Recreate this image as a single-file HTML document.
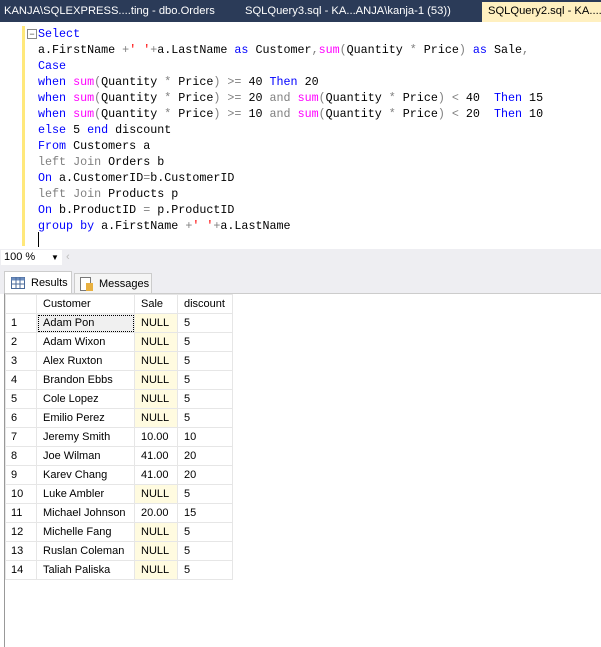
<!DOCTYPE html>
<html><head><style>
body{margin:0;width:601px;height:646px;overflow:hidden;background:#fff;font-family:"Liberation Sans",sans-serif;position:relative}
.tabbar{position:absolute;left:0;top:0;width:601px;height:22px;background:#2b3b58;color:#fff;font-size:11.2px;white-space:nowrap}
.tabbar span{position:absolute;top:5px}
.active{position:absolute;left:482px;top:2px;width:119px;height:20px;background:#fff0c0;color:#000;overflow:hidden}
.yb{position:absolute;left:22px;top:26px;width:3px;height:220px;background:#ffe87a}
.code{position:absolute;left:38px;top:26px;font-family:"Liberation Mono",monospace;font-size:11.7px;line-height:16px;white-space:pre;color:#000}
.k{color:#0000ff}.f{color:#ff00ff}.g{color:#808080}.r{color:#ff0000}.c{color:#008080}
.fold{position:absolute;left:27px;top:29px;width:8px;height:8px;border:1px solid #888;font-size:9px;line-height:8px;text-align:center;color:#444}
.zoombar{position:absolute;left:0;top:249px;width:601px;height:18px;background:#eeeef2}
.zsel{position:absolute;left:1px;top:250px;width:58px;height:15px;background:#fff;font-size:11px;line-height:15px;padding-left:3px}
.rtabs{position:absolute;left:0;top:267px;width:601px;height:27px;background:#eeeef2}
.rt{position:absolute;top:273px;height:20px;font-size:11px;line-height:20px;background:#f5f5f5;border:1px solid #ccc;border-bottom:none;white-space:nowrap}
.panel{position:absolute;left:4px;top:293px;width:597px;height:353px;border-left:1px solid #999;border-top:1px solid #ccc}
table{position:absolute;left:5px;top:294px;border-collapse:collapse;font-size:11px;white-space:nowrap}
td{height:18px;border:1px solid #e6e6e6;padding:0 0 0 6px;overflow:hidden}
td:nth-child(1){width:25px;padding-left:5px}
td:nth-child(2){width:91px}
td:nth-child(3){width:36px;background:#fffbe0}
td:nth-child(4){width:48px}
tr:first-child td{background:#fff}
</style></head><body>
<div class="tabbar"><span style="left:4px">KANJA\SQLEXPRESS....ting - dbo.Orders</span><span style="left:245px">SQLQuery3.sql - KA...ANJA\kanja-1 (53))</span><div class="active"><span style="left:6px;top:3px">SQLQuery2.sql - KA....</span></div></div>
<div class="yb"></div>
<div class="fold">−</div>
<div class="code"><span class="k">Select</span>
a.FirstName <span class="g">+</span><span class="r">' '</span><span class="g">+</span>a.LastName <span class="k">as</span> Customer<span class="g">,</span><span class="f">sum</span><span class="g">(</span>Quantity <span class="g">*</span> Price<span class="g">)</span> <span class="k">as</span> Sale<span class="g">,</span>
<span class="k">Case</span>
<span class="k">when</span> <span class="f">sum</span><span class="g">(</span>Quantity <span class="g">*</span> Price<span class="g">)</span> <span class="g">&gt;=</span> 40 <span class="k">Then</span> 20
<span class="k">when</span> <span class="f">sum</span><span class="g">(</span>Quantity <span class="g">*</span> Price<span class="g">)</span> <span class="g">&gt;=</span> 20 <span class="g">and</span> <span class="f">sum</span><span class="g">(</span>Quantity <span class="g">*</span> Price<span class="g">)</span> <span class="g">&lt;</span> 40  <span class="k">Then</span> 15
<span class="k">when</span> <span class="f">sum</span><span class="g">(</span>Quantity <span class="g">*</span> Price<span class="g">)</span> <span class="g">&gt;=</span> 10 <span class="g">and</span> <span class="f">sum</span><span class="g">(</span>Quantity <span class="g">*</span> Price<span class="g">)</span> <span class="g">&lt;</span> 20  <span class="k">Then</span> 10
<span class="k">else</span> 5 <span class="k">end</span> discount
<span class="k">From</span> Customers a
<span class="g">left</span> <span class="g">Join</span> Orders b
<span class="k">On</span> a.CustomerID<span class="g">=</span>b.CustomerID
<span class="g">left</span> <span class="g">Join</span> Products p
<span class="k">On</span> b.ProductID <span class="g">=</span> p.ProductID
<span class="k">group</span> <span class="k">by</span> a.FirstName <span class="g">+</span><span class="r">' '</span><span class="g">+</span>a.LastName</div>
<div style="position:absolute;left:38px;top:232px;width:1px;height:15px;background:#000"></div>
<div class="zoombar"></div>
<div class="zsel">100 %<span style="position:absolute;left:50px;font-size:8px">▼</span></div>
<div style="position:absolute;left:66px;top:251px;color:#bbb;font-size:11px">‹</div>
<div class="rtabs"></div>
<div class="rt" style="left:4px;width:66px;background:#fff;top:271px;height:23px">
<svg style="position:absolute;left:6px;top:5px" width="14" height="12"><rect x="0.5" y="0.5" width="13" height="11" fill="#fff" stroke="#4a6a9a"/><rect x="0.5" y="0.5" width="13" height="3" fill="#6d8fc0"/><path d="M5 0v12M9 0v12M0 7h14" stroke="#4a6a9a"/></svg>
<span style="position:absolute;left:26px;top:1px">Results</span></div>
<div class="rt" style="left:74px;width:76px">
<svg style="position:absolute;left:5px;top:3px" width="14" height="15"><rect x="0.5" y="0.5" width="10" height="13" fill="#fff" stroke="#777"/><rect x="6" y="6" width="7" height="8" fill="#e8b040"/></svg>
<span style="position:absolute;left:24px;top:0px">Messages</span></div>
<div class="panel"></div>
<table>
<tr><td></td><td>Customer</td><td>Sale</td><td>discount</td></tr>
<tr><td>1</td><td style="outline:1px dotted #000;outline-offset:-2px;background:#f0f0f0">Adam Pon</td><td>NULL</td><td>5</td></tr>
<tr><td>2</td><td>Adam Wixon</td><td>NULL</td><td>5</td></tr>
<tr><td>3</td><td>Alex Ruxton</td><td>NULL</td><td>5</td></tr>
<tr><td>4</td><td>Brandon Ebbs</td><td>NULL</td><td>5</td></tr>
<tr><td>5</td><td>Cole Lopez</td><td>NULL</td><td>5</td></tr>
<tr><td>6</td><td>Emilio Perez</td><td>NULL</td><td>5</td></tr>
<tr><td>7</td><td>Jeremy Smith</td><td style="background:#fff">10.00</td><td>10</td></tr>
<tr><td>8</td><td>Joe Wilman</td><td style="background:#fff">41.00</td><td>20</td></tr>
<tr><td>9</td><td>Karev Chang</td><td style="background:#fff">41.00</td><td>20</td></tr>
<tr><td>10</td><td>Luke Ambler</td><td>NULL</td><td>5</td></tr>
<tr><td>11</td><td>Michael Johnson</td><td style="background:#fff">20.00</td><td>15</td></tr>
<tr><td>12</td><td>Michelle Fang</td><td>NULL</td><td>5</td></tr>
<tr><td>13</td><td>Ruslan Coleman</td><td>NULL</td><td>5</td></tr>
<tr><td>14</td><td>Taliah Paliska</td><td>NULL</td><td>5</td></tr>
</table>
</body></html>
